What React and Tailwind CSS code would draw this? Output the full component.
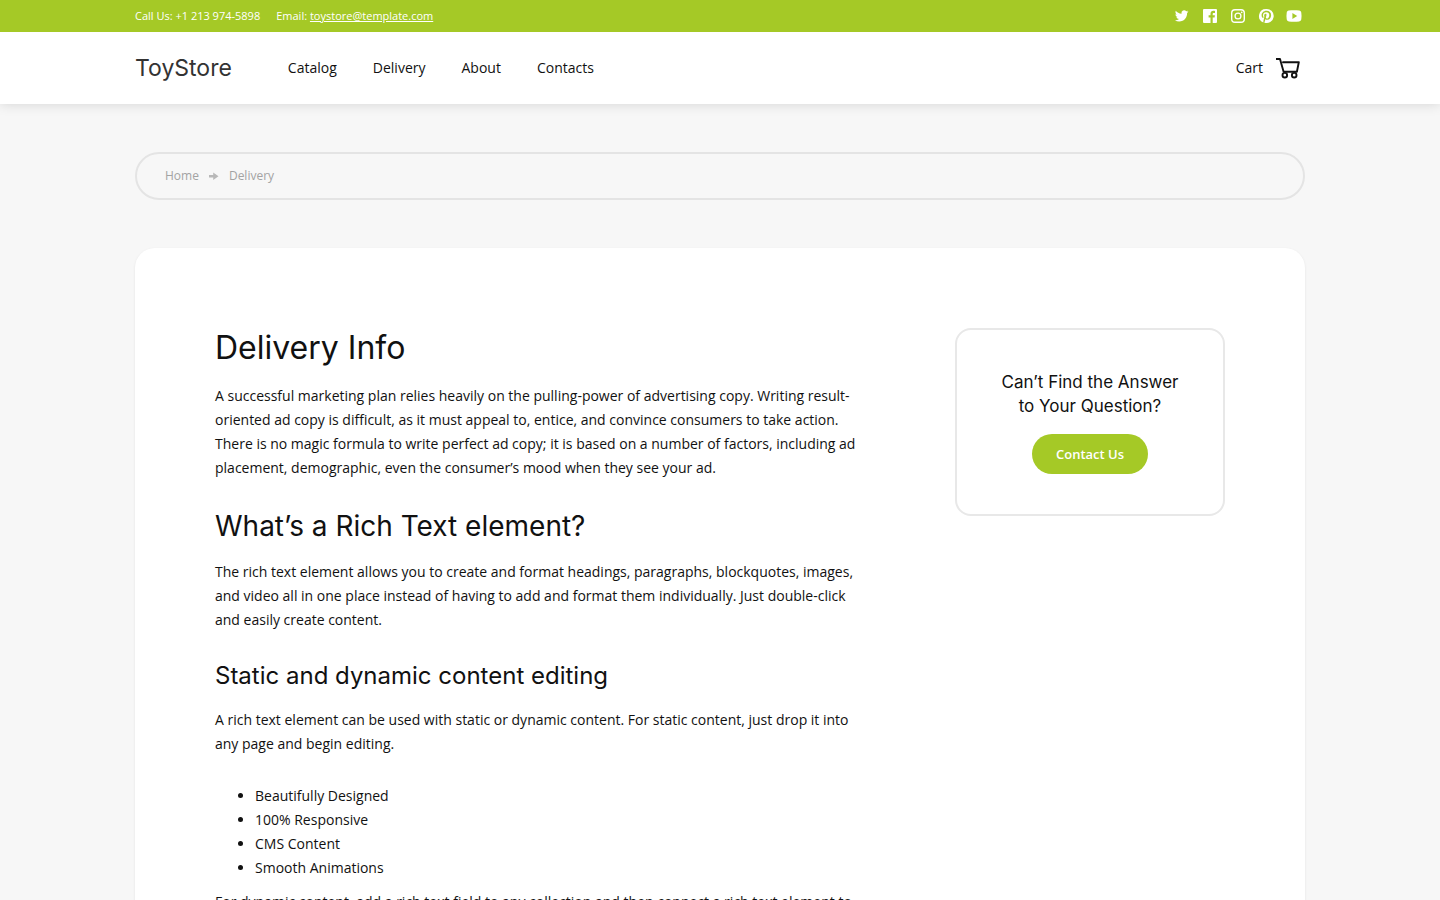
import React from "react";

const navLinks = ["Catalog", "Delivery", "About", "Contacts"];

const features = [
  "Beautifully Designed",
  "100% Responsive",
  "CMS Content",
  "Smooth Animations",
];

const socials = [
  {
    name: "Twitter",
    path: "M14.500 3.500c-.5.200-1 .400-1.600.500.600-.4 1-.9 1.200-1.500-.6.300-1.200.500-1.800.700A2.800 2.800 0 0 0 7.500 5.700C5.200 5.600 3.200 4.500 1.800 2.800c-.7 1.300-.3 2.900.900 3.700-.5 0-.9-.1-1.300-.3 0 1.300.900 2.500 2.300 2.800-.4.100-.8.100-1.300 0 .400 1.100 1.400 2 2.600 2A5.700 5.700 0 0 1 .9 12.200 8 8 0 0 0 5.200 13.500c5.200 0 8.100-4.300 7.900-8.500.6-.4 1-.9 1.400-1.500z",
  },
  {
    name: "Facebook",
    path: "M14 1H2a1 1 0 0 0-1 1v12a1 1 0 0 0 1 1h6.500V9.500H6.600V7.300h1.900V5.700c0-1.900 1.100-2.900 2.800-2.900.8 0 1.500.1 1.700.1v2h-1.200c-.9 0-1.100.4-1.100 1.100v1.300h2.200l-.3 2.200h-1.900V15H14a1 1 0 0 0 1-1V2a1 1 0 0 0-1-1z",
  },
  {
    name: "Instagram",
    path: "M5 1a4 4 0 0 0-4 4v6a4 4 0 0 0 4 4h6a4 4 0 0 0 4-4V5a4 4 0 0 0-4-4H5zm0 1.400h6A2.600 2.600 0 0 1 13.600 5v6a2.600 2.600 0 0 1-2.600 2.600H5A2.600 2.600 0 0 1 2.400 11V5A2.600 2.600 0 0 1 5 2.400zM8 4.400a3.600 3.600 0 1 0 0 7.200 3.600 3.600 0 0 0 0-7.200zm0 1.300a2.300 2.300 0 1 1 0 4.600 2.300 2.300 0 0 1 0-4.600zM11.700 3.400a.9.9 0 1 0 0 1.800.9.9 0 0 0 0-1.800z",
  },
  {
    name: "Pinterest",
    path: "M8 1a7 7 0 0 0-2.600 13.500c0-.6-.1-1.400.1-2.100l.9-3.800s-.2-.5-.2-1.100c0-1 .6-1.800 1.400-1.800.6 0 .9.5.9 1.100 0 .6-.4 1.600-.6 2.500-.2.700.4 1.300 1.100 1.300 1.300 0 2.300-1.700 2.300-3.700 0-1.500-1-2.700-2.900-2.700a3.300 3.300 0 0 0-3.400 3.300c0 .6.200 1 .4 1.300.1.200.2.200.1.400l-.1.500c0 .2-.2.200-.4.200-1-.4-1.400-1.500-1.400-2.700 0-2 1.700-4.400 5-4.400 2.700 0 4.500 2 4.500 4.100 0 2.800-1.600 4.900-3.800 4.900-.8 0-1.500-.4-1.800-.9l-.5 1.900c-.2.600-.5 1.200-.8 1.700A7 7 0 1 0 8 1z",
  },
  {
    name: "YouTube",
    path: "M15.300 4.700c-.2-1.200-.9-1.900-2.100-2.100C11.600 2.400 9.800 2.300 8 2.300s-3.600.1-5.200.3C1.600 2.800.9 3.500.7 4.700a22 22 0 0 0 0 6.600c.2 1.200.9 1.900 2.100 2.100 1.600.2 3.400.3 5.200.3s3.600-.1 5.200-.3c1.200-.2 1.900-.9 2.100-2.100a22 22 0 0 0 0-6.600zM6.400 10.900V5.100L11.200 8z",
  },
];

const CartIcon = () => (
  <svg
    viewBox="0 0 24 24"
    className="w-6 h-6"
    fill="none"
    stroke="currentColor"
    strokeWidth="1.900"
    aria-hidden="true"
  >
    <path d="M.3 3h3.700l3.600 12.700h13.300L22.800 6.200H7" strokeLinejoin="round" strokeLinecap="round" />
    <circle cx="8.800" cy="19.200" r="2.300" />
    <circle cx="18.200" cy="19.200" r="2.300" />
  </svg>
);

const Container = ({ className, children }) => (
  <div className={`max-w-[1170px] mx-auto ${className}`}>{children}</div>
);

const TopBar = () => (
  <div className="relative z-10 bg-[#a5c926] text-white">
    <Container className="flex items-center justify-between h-8">
      <div className="flex gap-4 text-[11px] leading-4">
        <span>Call Us: +1 213 974-5898</span>
        <span>
          Email:{" "}
          <a href="mailto:toystore@template.com" className="underline">
            toystore@template.com
          </a>
        </span>
      </div>
      <div className="flex gap-3 pr-[3px]">
        {socials.map((social) => (
          <a key={social.name} href="#" aria-label={social.name}>
            <svg viewBox="0 0 16 16" className="w-4 h-4" fill="currentColor">
              <path d={social.path} />
            </svg>
          </a>
        ))}
      </div>
    </Container>
  </div>
);

const Header = () => (
  <header className="bg-white shadow-[0_0_12px_rgba(0,0,0,0.15)]">
    <Container className="flex items-center h-18">
      <a href="#" className="font-['Inter',sans-serif] text-[23px] leading-8 text-[#333]">
        ToyStore
      </a>
      <nav className="flex gap-9 ml-14">
        {navLinks.map((link) => (
          <a key={link} href="#">
            {link}
          </a>
        ))}
      </nav>
      <a href="#" className="flex items-center gap-[13px] ml-auto pr-[5px]">
        Cart
        <CartIcon />
      </a>
    </Container>
  </header>
);

const Breadcrumbs = () => (
  <nav
    aria-label="Breadcrumb"
    className="flex items-center gap-[9px] h-12 px-7 border-2 border-[#e4e4e4] rounded-full text-xs text-[#a3a3a3]"
  >
    <a href="#">Home</a>
    <svg viewBox="0 0 12 12" className="w-3 h-3 text-[#b8b8b8]" fill="currentColor" aria-hidden="true">
      <path d="M1 5h4.200V2.500L10.500 6.300 5.200 10V7.500H1z" />
    </svg>
    <a href="#">Delivery</a>
  </nav>
);

const ContactCard = () => (
  <aside className="w-[270px] shrink-0 flex flex-col items-center px-8 py-10 border-2 border-[#e8e8e8] rounded-2xl text-center">
    <h4 className="font-['Inter',sans-serif] text-[17px] leading-6">
      Can’t Find the Answer
      <br />
      to Your Question?
    </h4>
    <a
      href="#"
      className="mt-4 px-6 py-2 rounded-full bg-[#a5c926] text-white text-[13px] leading-6 font-semibold"
    >
      Contact Us
    </a>
  </aside>
);

const Article = () => (
  <article className="flex-1 min-w-0">
    <h1 className="font-['Inter',sans-serif] text-[32px] leading-10 mb-4">Delivery Info</h1>
    <p>
      A successful marketing plan relies heavily on the pulling-power of advertising copy. Writing
      result-oriented ad copy is difficult, as it must appeal to, entice, and convince consumers to
      take action. There is no magic formula to write perfect ad copy; it is based on a number of
      factors, including ad placement, demographic, even the consumer’s mood when they see your ad.
    </p>
    <h2 className="font-['Inter',sans-serif] text-[28px] leading-9 mt-7 mb-4">
      What’s a Rich Text element?
    </h2>
    <p>
      The rich text element allows you to create and format headings, paragraphs, blockquotes,
      images, and video all in one place instead of having to add and format them individually. Just
      double-click and easily create content.
    </p>
    <h3 className="font-['Inter',sans-serif] text-2xl mt-7 mb-4">
      Static and dynamic content editing
    </h3>
    <p>
      A rich text element can be used with static or dynamic content. For static content, just drop
      it into any page and begin editing.
    </p>
    <ul className="list-disc pl-10 mt-7 mb-[10px]">
      {features.map((feature) => (
        <li key={feature}>{feature}</li>
      ))}
    </ul>
    <p>
      For dynamic content, add a rich text field to any collection and then connect a rich text
      element to that field in the settings panel. Voila!
    </p>
  </article>
);

export default function App() {
  return (
    <div className="min-h-screen bg-[#f7f7f7] font-['Open_Sans',sans-serif] text-sm leading-6 text-[#111]">
      <TopBar />
      <Header />
      <Container className="py-12">
        <Breadcrumbs />
        <main className="flex items-start gap-[90px] mt-12 p-20 bg-white rounded-[20px] shadow-[0_1px_3px_rgba(0,0,0,0.08)]">
          <Article />
          <ContactCard />
        </main>
      </Container>
    </div>
  );
}
